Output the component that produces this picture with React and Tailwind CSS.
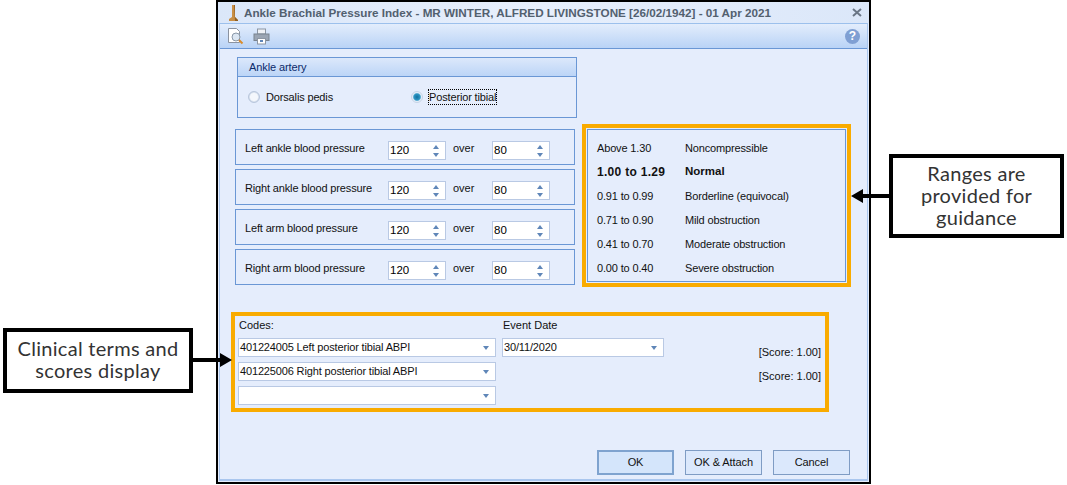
import React from "react";

const pressureRows = [
  "Left ankle blood pressure",
  "Right ankle blood pressure",
  "Left arm blood pressure",
  "Right arm blood pressure",
];

const ranges = [
  ["Above 1.30", "Noncompressible"],
  ["1.00 to 1.29", "Normal", true],
  ["0.91 to 0.99", "Borderline (equivocal)"],
  ["0.71 to 0.90", "Mild obstruction"],
  ["0.41 to 0.70", "Moderate obstruction"],
  ["0.00 to 0.40", "Severe obstruction"],
];

function Caret({ up }) {
  return (
    <svg width="6" height="4" viewBox="0 0 6 4" className="block">
      <path d={up ? "M3 0L6 4H0Z" : "M0 0H6L3 4Z"} fill="#5f86b8" />
    </svg>
  );
}

function Spinner({ value }) {
  return (
    <div className="w-[58px] h-[19px] bg-white border border-[#b9c9e4] flex items-center pl-[1px] pr-[6px] justify-between">
      <span className="text-[11.5px] leading-none text-black">{value}</span>
      <div className="flex flex-col gap-[4px]">
        <Caret up />
        <Caret />
      </div>
    </div>
  );
}

function PressureRow({ label }) {
  return (
    <div className="w-[340px] h-[36px] border border-[#6a97d5] flex items-start pt-[11px] pl-[9px]">
      <div className="w-[143px] text-[11px] tracking-[-0.15px] leading-[14px] whitespace-nowrap">{label}</div>
      <Spinner value="120" />
      <div className="w-[46px] pl-[7px] text-[11px] leading-[14px]">over</div>
      <Spinner value="80" />
    </div>
  );
}

function Combo({ value, width }) {
  return (
    <div className={`h-[19px] bg-white border border-[#b9c9e4] flex items-center justify-between pl-[1px] pr-[6px] ${width}`}>
      <span className="text-[11px] tracking-[-0.15px] leading-none whitespace-nowrap -mt-[1px]">{value}</span>
      <Caret />
    </div>
  );
}

function Radio({ checked, label }) {
  return (
    <div className="flex items-center gap-[6px] -mt-[1px]">
      {checked ? (
        <div className="w-[12px] h-[12px] rounded-full border border-[#c5d3e6] bg-[radial-gradient(circle,#0f6f9f_0%,#2f97c4_45%,#e3edf9_62%,#f4f7fc_100%)]" />
      ) : (
        <div className="w-[12px] h-[12px] rounded-full border border-[#b8c6dc] bg-[radial-gradient(circle,#f4f7fc_0%,#f4f7fc_50%,#c9d5e6_75%,#eef2f9_100%)]" />
      )}
      <span className={`text-[11px] tracking-[-0.15px] leading-[14px] ${checked ? "outline-1 outline-dotted outline-black" : ""}`}>{label}</span>
    </div>
  );
}

function DlgButton({ children, isDefault }) {
  return (
    <div
      className={`w-[77px] h-[25px] flex items-center justify-center text-[11px] tracking-[-0.1px] ${
        isDefault ? "border-2 border-[#7fa3cf] bg-[#d4e5fb]" : "border border-[#7f9cc4] bg-[#dbe8fc]"
      }`}
    >
      {children}
    </div>
  );
}

function Callout({ className, children }) {
  return (
    <div
      className={`absolute bg-white border-[4px] border-black flex items-center justify-center text-center text-[#333] text-[20px] leading-[22px] tracking-[0.3px] font-['Lato',sans-serif] ${className}`}
    >
      {children}
    </div>
  );
}

export default function App() {
  return (
    <div className="relative w-[1067px] h-[485px] bg-white overflow-hidden font-['Liberation_Sans',Arial,sans-serif] text-[#111]">
      <div className="ml-[216px] w-[655px] h-[484px] border-x-2 border-y-2 border-black bg-[#e5edfc] flex flex-col">
        {/* title bar */}
        <div className="h-[21px] shrink-0 flex items-center bg-[linear-gradient(90deg,#dbe7f9,#e7effc_50%,#dbe7f9)]">
          <svg width="12" height="18" viewBox="0 0 12 18" className="ml-[9px] mt-[1px]">
            <path d="M5 1H8V13L11 16V17H2V15L5 13Z" fill="#c98f45" />
            <path d="M7 1H8V13L11 16V17H8Z" fill="#8f5f24" />
          </svg>
          <div className="ml-[5px] text-[11.7px] font-bold text-[#52606f] whitespace-nowrap">
            Ankle Brachial Pressure Index - MR WINTER, ALFRED LIVINGSTONE [26/02/1942] - 01 Apr 2021
          </div>
          <svg width="10" height="9" viewBox="0 0 10 9" className="ml-auto mr-[7px]">
            <path d="M1 1L9 8M9 1L1 8" stroke="#6a7686" strokeWidth="2" />
          </svg>
        </div>

        <div className="flex-1 mx-[1px] mb-[1px] border-x border-b-2 border-[#a9c6ee] border-t border-t-[#9cc0ec] flex flex-col min-h-0">
          {/* toolbar */}
          <div className="h-[25px] shrink-0 flex items-center border-b border-[#6a97d5] bg-[linear-gradient(180deg,#e3edfc,#b9d3f6)] pl-[7px] pr-[7px]">
            <svg width="17" height="18" viewBox="0 0 17 18">
              <path d="M1.500 1.500H9.500L12.500 4.500V15.500H1.500Z" fill="#fff" stroke="#8b93a0" />
              <circle cx="9" cy="10" r="4" fill="#dbe6f2" stroke="#8a98a8" />
              <path d="M12 13L15.500 16.500" stroke="#d98c2b" strokeWidth="2" />
            </svg>
            <svg width="17" height="17" viewBox="0 0 17 17" className="ml-[9px]">
              <rect x="4.500" y="1" width="8" height="5" fill="#eef1f5" stroke="#8c96a3" />
              <rect x="1" y="6" width="15" height="6.500" fill="#9aa5b3" stroke="#79838f" />
              <rect x="4.500" y="10.500" width="8" height="5.500" fill="#fff" stroke="#8c96a3" />
              <rect x="7" y="12" width="3" height="2" fill="#5f86b8" />
            </svg>
            <div className="ml-auto w-[15px] h-[15px] rounded-full bg-[#7f9fd3] flex items-center justify-center text-white text-[12px] font-bold leading-none">
              ?
            </div>
          </div>

          {/* body */}
          <div className="flex-1 flex flex-col min-h-0 pl-[15px]">
            <div className="flex h-[239px] shrink-0">
              <div className="w-[340px] flex flex-col pt-[8px]">
                <div className="ml-[2px] w-[340px] h-[61px] border border-[#6a97d5] flex flex-col">
                  <div className="h-[19px] shrink-0 border-b border-[#6a97d5] bg-[linear-gradient(180deg,#dce8fb,#bcd5f7)] pl-[11px] text-[11px] tracking-[-0.1px] leading-[18px] text-[#0b2a6b]">
                    Ankle artery
                  </div>
                  <div className="flex-1 flex items-center pl-[10px]">
                    <div className="w-[163px]">
                      <Radio label="Dorsalis pedis" />
                    </div>
                    <Radio checked label="Posterior tibial" />
                  </div>
                </div>
                <div className="flex flex-col gap-[4px] mt-[11px]">
                  {pressureRows.map((label) => (
                    <PressureRow key={label} label={label} />
                  ))}
                </div>
              </div>

              {/* ranges */}
              <div className="ml-[7px] mt-[75px] w-[269px] h-[163px] border-[4px] border-[#f9ab00] p-[1px]">
                <div className="h-full border border-[#6a97d5] pl-[9px] pt-[6px]">
                  {ranges.map(([range, label, bold]) => (
                    <div key={range} className={`flex h-[24px] items-center text-[11px] tracking-[-0.15px] ${bold ? "font-bold" : ""}`}>
                      <div className={`w-[88px] ${bold ? "text-[12px] tracking-[0.3px]" : ""}`}>{range}</div>
                      <div className={bold ? "text-[11.5px] tracking-normal" : ""}>{label}</div>
                    </div>
                  ))}
                </div>
              </div>
            </div>

            {/* codes */}
            <div className="w-[598px] h-[100px] -ml-[4px] mt-[24px] border-[4px] border-[#f9ab00] shrink-0 flex pl-[3px]">
              <div className="w-[264px] pt-[1px]">
                <div className="h-[18px] text-[11px] leading-[16px] pl-[1px]">Codes:</div>
                <div className="flex flex-col gap-[5px] mt-[3px]">
                  <Combo width="w-[258px]" value="401224005 Left posterior tibial ABPI" />
                  <Combo width="w-[258px]" value="401225006 Right posterior tibial ABPI" />
                  <Combo width="w-[258px]" value="" />
                </div>
              </div>
              <div className="w-[162px] pt-[1px]">
                <div className="h-[18px] text-[11px] leading-[16px] pl-[1px]">Event Date</div>
                <div className="mt-[3px]">
                  <Combo width="w-[162px]" value="30/11/2020" />
                </div>
              </div>
              <div className="flex-1 flex flex-col items-end pr-[4px] pt-[24px] text-[11px]">
                <div className="h-[24px] leading-[24px]">[Score: 1.00]</div>
                <div className="h-[24px] leading-[24px]">[Score: 1.00]</div>
              </div>
            </div>

            {/* buttons */}
            <div className="flex gap-[11px] justify-end pr-[17px] mt-[38px]">
              <DlgButton isDefault>OK</DlgButton>
              <DlgButton>OK &amp; Attach</DlgButton>
              <DlgButton>Cancel</DlgButton>
            </div>
          </div>
        </div>
      </div>

      {/* annotations */}
      <Callout className="left-[889px] top-[154px] w-[175px] h-[84px]">
        <div className="-mt-[2px]">
          Ranges are
          <br />
          provided for
          <br />
          guidance
        </div>
      </Callout>
      <svg width="40" height="14" viewBox="0 0 40 14" className="absolute left-[851px] top-[189px]">
        <path d="M0 7L12 0V5H40V9H12V14Z" fill="#000" />
      </svg>

      <Callout className="left-[3px] top-[328px] w-[190px] h-[65px]">
        <div className="-mt-[3px]">
          Clinical terms and
          <br />
          scores display
        </div>
      </Callout>
      <svg width="40" height="14" viewBox="0 0 40 14" className="absolute left-[192px] top-[353px]">
        <path d="M40 7L28 0V5H0V9H28V14Z" fill="#000" />
      </svg>
    </div>
  );
}
